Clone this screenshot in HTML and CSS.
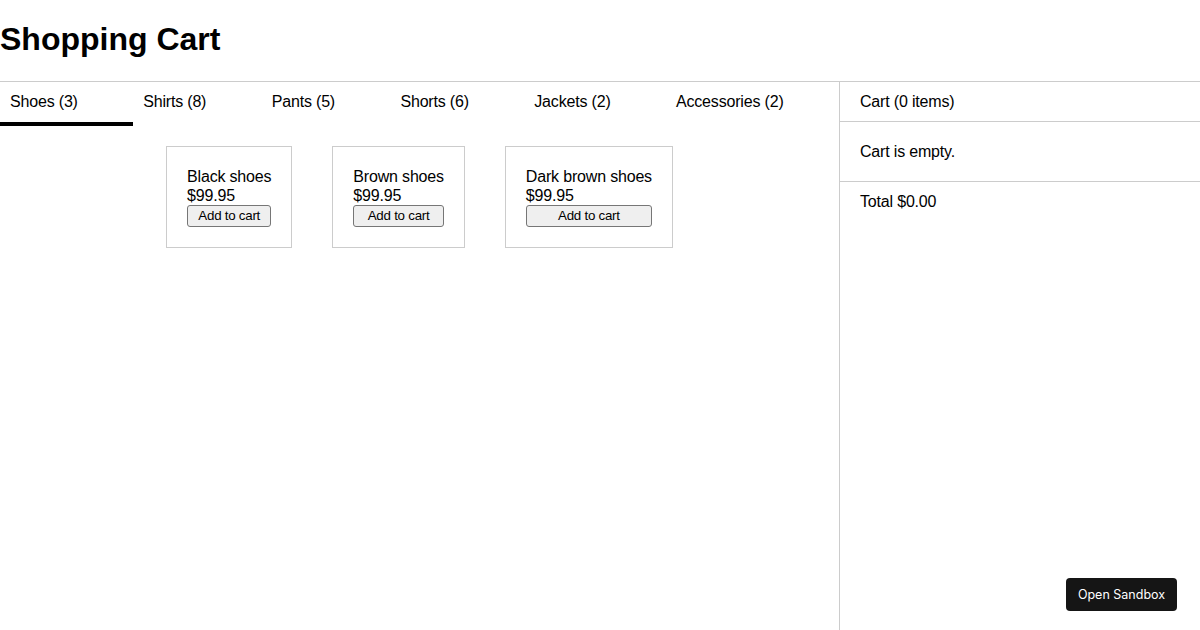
FILE: index.html
```html
<!DOCTYPE html>
<html lang="en">
<head>
<meta charset="utf-8">
<title>Shopping Cart</title>
<link rel="stylesheet" href="styles.css">
</head>
<body>
<div class="page">
  <h1 class="title">Shopping Cart</h1>
  <div class="main">
    <section class="catalog">
      <nav class="tabs">
        <div class="tab active">Shoes (3)</div>
        <div class="tab">Shirts (8)</div>
        <div class="tab">Pants (5)</div>
        <div class="tab">Shorts (6)</div>
        <div class="tab">Jackets (2)</div>
        <div class="tab">Accessories (2)</div>
      </nav>
      <div class="products">
        <div class="card">
          <div class="name">Black shoes</div>
          <div class="price">$99.95</div>
          <button class="add">Add to cart</button>
        </div>
        <div class="card">
          <div class="name">Brown shoes</div>
          <div class="price">$99.95</div>
          <button class="add">Add to cart</button>
        </div>
        <div class="card">
          <div class="name">Dark brown shoes</div>
          <div class="price">$99.95</div>
          <button class="add">Add to cart</button>
        </div>
      </div>
    </section>
    <aside class="cart">
      <div class="cart-head">Cart (0 items)</div>
      <div class="cart-body">Cart is empty.</div>
      <div class="cart-total">Total $0.00</div>
    </aside>
  </div>
</div>
<button class="sandbox">Open Sandbox</button>
</body>
</html>
```

FILE: styles.css
```css
html, body {
  margin: 0;
  padding: 0;
  background: #fff;
  color: #000;
  font-family: "Liberation Sans", Arial, sans-serif;
  font-size: 16px;
}

.page {
  display: flex;
  flex-direction: column;
  height: 100vh;
}

.title {
  font-size: 32px;
  font-weight: bold;
  margin: 21px 0 23px;
  line-height: 37px;
}

.main {
  flex: 1;
  display: flex;
  border-top: 1px solid #ccc;
  letter-spacing: -0.18px;
}

.catalog {
  flex: 1;
  min-width: 0;
}

.tabs {
  display: flex;
}

.tab {
  flex: 1 1 auto;
  padding: 11px 10px 11px;
  border-bottom: 4px solid transparent;
  white-space: nowrap;
}

.tab.active {
  border-bottom-color: #000;
}

.products {
  display: flex;
  justify-content: center;
  gap: 40px;
  margin-top: 20px;
}

.card {
  border: 1px solid #ccc;
  padding: 20px;
}

.name,
.price {
  line-height: 19px;
}

.add {
  display: block;
  width: 100%;
  font-family: "Liberation Sans", Arial, sans-serif;
  font-size: 13.33px;
  line-height: 16px;
  letter-spacing: -0.25px;
  padding: 2px 6px;
  background: #efefef;
  border: 1px solid #767676;
  border-radius: 3px;
  color: #000;
}

.cart {
  width: 30%;
  border-left: 1px solid #ccc;
}

.cart-head {
  padding: 11px 20px 10px;
  border-bottom: 1px solid #ccc;
}

.cart-body {
  padding: 21px 20px 20px;
  border-bottom: 1px solid #ccc;
}

.cart-total {
  padding: 11px 20px;
}

.sandbox {
  position: fixed;
  right: 23px;
  bottom: 19px;
  width: 111px;
  height: 33px;
  background: #151515;
  color: #fff;
  border: none;
  border-radius: 4px;
  font-family: Inter, "Liberation Sans", sans-serif;
  font-size: 12.5px;
  padding: 0;
}
```
